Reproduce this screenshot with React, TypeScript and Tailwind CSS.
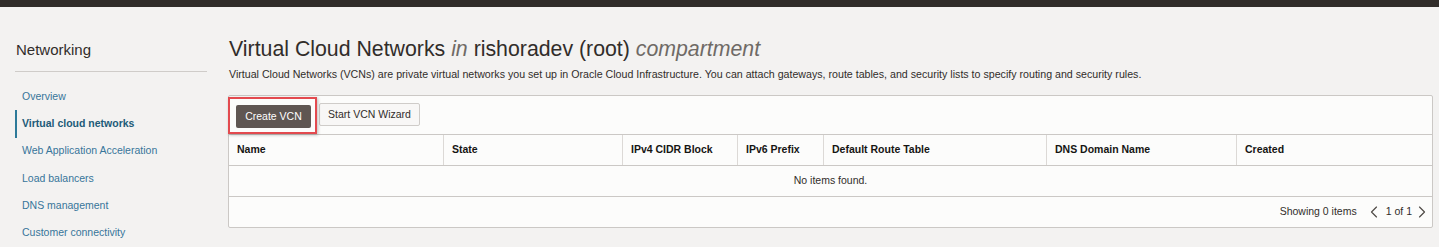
import { ChevronLeft, ChevronRight } from "lucide-react";

const navItems = [
  "Overview",
  "Virtual cloud networks",
  "Web Application Acceleration",
  "Load balancers",
  "DNS management",
  "Customer connectivity",
];

const columns = [
  "Name",
  "State",
  "IPv4 CIDR Block",
  "IPv6 Prefix",
  "Default Route Table",
  "DNS Domain Name",
  "Created",
];

export default function App() {
  return (
    <div
      className="h-[247px] w-full overflow-hidden bg-[#f3f2f1] text-[#312d2a]"
      style={{ fontFamily: '"Liberation Sans", Arial, sans-serif' }}
    >
      <div className="h-[7px] bg-[#312d2a]" />
      <div className="flex">
        {/* sidebar */}
        <aside className="ml-[15px] w-[192px] shrink-0 pt-[34px]">
          <h2 className="pl-px text-[15px] leading-[18px] text-[#312d2a]">Networking</h2>
          <div className="mt-[12px] border-t border-[#cfccc9]" />
          <nav className="mt-[11px] flex flex-col">
            {navItems.map((item, i) => {
              const active = i === 1;
              return (
                <a
                  key={item}
                  href="#"
                  className={`flex h-[27.25px] items-center text-[10.5px] ${
                    active
                      ? "border-l-2 border-[#2d7a99] pl-[5px] font-bold text-[#215b78]"
                      : "pl-[7px] text-[#37759a]"
                  }`}
                >
                  {item}
                </a>
              );
            })}
          </nav>
        </aside>

        {/* main */}
        <main className="ml-[21px] w-[1205px] shrink-0 pt-[30px]">
          <h1 className="pl-px text-[21.3px] leading-[24px] text-[#312d2a]">
            Virtual Cloud Networks <em className="text-[#6f6a66]">in</em> rishoradev (root){" "}
            <em className="text-[#6f6a66]">compartment</em>
          </h1>
          <p className="mt-[6px] pl-px text-[10.65px] leading-[14px] text-[#312d2a]">
            Virtual Cloud Networks (VCNs) are private virtual networks you set up in Oracle Cloud
            Infrastructure. You can attach gateways, route tables, and security lists to specify
            routing and security rules.
          </p>

          <div className="mt-[14px] rounded-[2px] border border-[#cbc8c5] bg-[#fcfcfb]">
            <div className="flex h-[38px] items-start gap-[8px] pl-[7px] pt-[7px]">
              <div className="relative">
                <button
                  type="button"
                  className="h-[23px] w-[75px] rounded-[2px] bg-[#5f5652] text-[10.5px] text-white"
                >
                  Create VCN
                </button>
                <div className="pointer-events-none absolute -bottom-[6px] -left-[8px] -right-[6px] -top-[6px] border-2 border-[#e34a4f] shadow-[1px_1px_3px_rgba(0,0,0,0.25)]" />
              </div>
              <button
                type="button"
                className="h-[23px] w-[101px] rounded-[2px] border border-[#cfccc9] bg-[#f8f7f6] text-[10.5px] text-[#312d2a]"
              >
                Start VCN Wizard
              </button>
            </div>

            <div className="grid grid-cols-[214px_179px_115px_86px_223px_190px_1fr] border-t border-[#cbc8c5]">
              {columns.map((c, i) => (
                <div
                  key={c}
                  className={`flex h-[30px] items-center pl-[8px] text-[10.5px] font-bold text-[#161513] ${
                    i > 0 ? "border-l border-[#dcd9d6]" : ""
                  }`}
                >
                  {c}
                </div>
              ))}
            </div>
            <div className="flex h-[31px] items-center justify-center border-t border-[#cbc8c5] text-[10.5px] text-[#312d2a]">
              No items found.
            </div>
            <div className="flex h-[31px] items-center justify-end border-t border-[#cbc8c5] text-[10.5px] text-[#312d2a]">
              <span>Showing 0 items</span>
              <ChevronLeft className="ml-[7px] h-[20px] w-[20px] text-[#4f4a46]" strokeWidth={1.4} />
              <span className="ml-[2px]">1 of 1</span>
              <ChevronRight className="h-[20px] w-[20px] text-[#4f4a46]" strokeWidth={1.4} />
            </div>
          </div>
        </main>
      </div>
    </div>
  );
}
